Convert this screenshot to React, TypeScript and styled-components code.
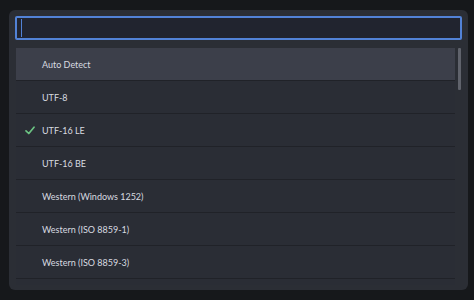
import styled, { createGlobalStyle } from "styled-components";

const ENCODINGS = [
  "Auto Detect",
  "UTF-8",
  "UTF-16 LE",
  "UTF-16 BE",
  "Western (Windows 1252)",
  "Western (ISO 8859-1)",
  "Western (ISO 8859-3)",
];

const SELECTED = "UTF-16 LE";
const HIGHLIGHTED = "Auto Detect";

const GlobalStyle = createGlobalStyle`
  html, body {
    margin: 0;
    padding: 0;
    background: #16181b;
  }
  body {
    font-family: Lato, "Noto Sans", sans-serif;
  }
`;

const Check = () => (
  <svg width="10" height="9" viewBox="0 0 10 9">
    <path
      d="M1 4.8 L3.8 7.5 L9 1.2"
      fill="none"
      stroke="#6cc483"
      strokeWidth="1.7"
      strokeLinecap="round"
      strokeLinejoin="round"
    />
  </svg>
);

const App = () => {
  return (
    <Screen>
      <GlobalStyle />
      <Panel>
        <Field>
          <Caret />
        </Field>
        <ListArea>
          <List>
            {ENCODINGS.map((name) => (
              <Row key={name} active={name === HIGHLIGHTED}>
                <Mark>{name === SELECTED && <Check />}</Mark>
                <Label>{name}</Label>
              </Row>
            ))}
            <Row active={false} />
          </List>
          <Track>
            <Thumb />
          </Track>
        </ListArea>
      </Panel>
    </Screen>
  );
};

const Screen = styled.div`
  width: 474px;
  height: 300px;
  overflow: hidden;
  padding: 10px 0 0 9px;
  box-sizing: border-box;
`;
const Panel = styled.div`
  width: 459px;
  height: 280px;
  box-sizing: border-box;
  background: #2b2e35;
  border-radius: 6px;
  padding: 6px 6px 5px 6px;
  display: flex;
  flex-direction: column;
  gap: 8px;
`;
const Field = styled.div`
  height: 24px;
  box-sizing: border-box;
  border: 2px solid #5282d6;
  border-radius: 2px;
  background: #21242f;
  display: flex;
  align-items: center;
  padding-left: 4px;
`;
const Caret = styled.div`
  width: 1px;
  height: 18px;
  background: #5282d6;
`;
const ListArea = styled.div`
  flex: 1;
  min-height: 0;
  display: flex;
  gap: 1px;
  padding-left: 1px;
`;
const List = styled.div`
  flex: 1;
  overflow: hidden;
  display: flex;
  flex-direction: column;
`;
const Row = styled.div<{ active: boolean }>`
  flex: none;
  height: 33px;
  box-sizing: border-box;
  border-bottom: 1px solid #202228;
  background: ${(p) => (p.active ? "#3c3f4a" : "#2a2d35")};
  display: flex;
  align-items: center;
`;
const Mark = styled.span`
  width: 25px;
  display: flex;
  justify-content: center;
  padding-left: 1px;
`;
const Label = styled.span`
  font-size: 9px;
  color: #d8dbe0;
`;
const Track = styled.div`
  width: 6px;
  display: flex;
  justify-content: center;
`;
const Thumb = styled.div`
  width: 3px;
  height: 42px;
  border-radius: 1px;
  background: #60636c;
`;

export default App;
